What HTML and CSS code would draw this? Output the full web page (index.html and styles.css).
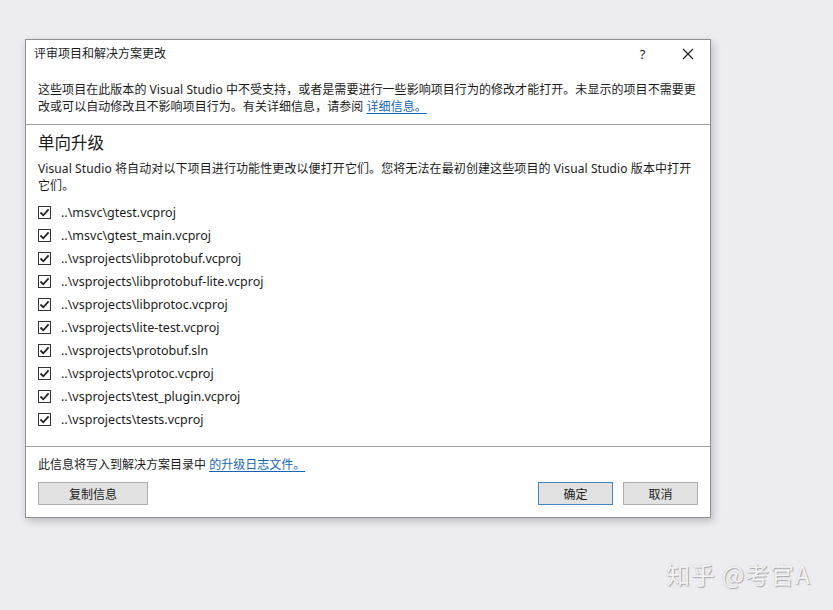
FILE: index.html
```html
<!DOCTYPE html>
<html lang="zh-CN">
<head>
<meta charset="utf-8">
<title>评审项目和解决方案更改</title>
<link rel="stylesheet" href="styles.css">
</head>
<body>
<div class="dialog">
  <div class="titlebar">
    <div class="title">评审项目和解决方案更改</div>
    <div class="tb-btn help">?</div>
    <div class="tb-btn close">
      <svg width="12" height="12" viewBox="0 0 12 12"><path d="M1 1 L11 11 M11 1 L1 11" stroke="#1a1a1a" stroke-width="1.1" fill="none"/></svg>
    </div>
  </div>
  <div class="intro">
    这些项目在此版本的 Visual Studio 中不受支持，或者是需要进行一些影响项目行为的修改才能打开。未显示的项目不需要更<br>改或可以自动修改且不影响项目行为。有关详细信息，请参阅 <a class="link">详细信息。</a>
  </div>
  <div class="section">
    <div class="heading">单向升级</div>
    <div class="desc">Visual Studio 将自动对以下项目进行功能性更改以便打开它们。您将无法在最初创建这些项目的 Visual Studio 版本中打开<br>它们。</div>
    <ul class="list">
      <li><span class="cb"><svg width="11" height="11" viewBox="0 0 11 11"><path d="M1.5 5.5 L4.3 8.3 L9.6 2.4" stroke="#222" stroke-width="1.8" fill="none"/></svg></span>..\msvc\gtest.vcproj</li>
      <li><span class="cb"><svg width="11" height="11" viewBox="0 0 11 11"><path d="M1.5 5.5 L4.3 8.3 L9.6 2.4" stroke="#222" stroke-width="1.8" fill="none"/></svg></span>..\msvc\gtest_main.vcproj</li>
      <li><span class="cb"><svg width="11" height="11" viewBox="0 0 11 11"><path d="M1.5 5.5 L4.3 8.3 L9.6 2.4" stroke="#222" stroke-width="1.8" fill="none"/></svg></span>..\vsprojects\libprotobuf.vcproj</li>
      <li><span class="cb"><svg width="11" height="11" viewBox="0 0 11 11"><path d="M1.5 5.5 L4.3 8.3 L9.6 2.4" stroke="#222" stroke-width="1.8" fill="none"/></svg></span>..\vsprojects\libprotobuf-lite.vcproj</li>
      <li><span class="cb"><svg width="11" height="11" viewBox="0 0 11 11"><path d="M1.5 5.5 L4.3 8.3 L9.6 2.4" stroke="#222" stroke-width="1.8" fill="none"/></svg></span>..\vsprojects\libprotoc.vcproj</li>
      <li><span class="cb"><svg width="11" height="11" viewBox="0 0 11 11"><path d="M1.5 5.5 L4.3 8.3 L9.6 2.4" stroke="#222" stroke-width="1.8" fill="none"/></svg></span>..\vsprojects\lite-test.vcproj</li>
      <li><span class="cb"><svg width="11" height="11" viewBox="0 0 11 11"><path d="M1.5 5.5 L4.3 8.3 L9.6 2.4" stroke="#222" stroke-width="1.8" fill="none"/></svg></span>..\vsprojects\protobuf.sln</li>
      <li><span class="cb"><svg width="11" height="11" viewBox="0 0 11 11"><path d="M1.5 5.5 L4.3 8.3 L9.6 2.4" stroke="#222" stroke-width="1.8" fill="none"/></svg></span>..\vsprojects\protoc.vcproj</li>
      <li><span class="cb"><svg width="11" height="11" viewBox="0 0 11 11"><path d="M1.5 5.5 L4.3 8.3 L9.6 2.4" stroke="#222" stroke-width="1.8" fill="none"/></svg></span>..\vsprojects\test_plugin.vcproj</li>
      <li><span class="cb"><svg width="11" height="11" viewBox="0 0 11 11"><path d="M1.5 5.5 L4.3 8.3 L9.6 2.4" stroke="#222" stroke-width="1.8" fill="none"/></svg></span>..\vsprojects\tests.vcproj</li>
    </ul>
  </div>
  <div class="footer">
    <div class="note">此信息将写入到解决方案目录中 <a class="link">的升级日志文件。</a></div>
    <div class="buttons">
      <button class="btn copy">复制信息</button>
      <div class="spacer"></div>
      <button class="btn ok">确定</button>
      <button class="btn cancel">取消</button>
    </div>
  </div>
</div>
<div class="watermark">知乎 @考官A</div>
</body>
</html>
```

FILE: styles.css
```css
html, body {
  margin: 0;
  padding: 0;
}
body {
  background: #ededf1;
  width: 833px;
  height: 610px;
  overflow: hidden;
  position: relative;
  font-family: "Segoe UI", "Noto Sans", "Noto Sans CJK SC", sans-serif;
  font-size: 12px;
  color: #1b1b1b;
  padding-top: 39px;
  box-sizing: border-box;
}
.dialog {
  margin-left: 25px;
  width: 684px;
  background: #fff;
  border: 1px solid #8e8e8e;
  box-shadow: 2px 3px 8px rgba(0, 0, 0, 0.22);
}
.titlebar {
  height: 27px;
  display: flex;
  align-items: center;
}
.title {
  flex: 1;
  padding-left: 8px;
  font-size: 12px;
  line-height: 17px;
}
.tb-btn {
  width: 45px;
  height: 27px;
  display: flex;
  align-items: center;
  justify-content: center;
}
.help {
  font-size: 13px;
  padding-left: 2px;
}
.close svg {
  display: block;
}
.intro {
  padding: 14px 12px 9px 12px;
  line-height: 17px;
  border-bottom: 1px solid #a0a0a0;
  white-space: nowrap;
  letter-spacing: 0.05px;
}
.link {
  color: #1565b7;
  text-decoration: underline;
  text-underline-offset: 2px;
}
.section {
  padding: 7px 12px 15px 12px;
  border-bottom: 1px solid #a0a0a0;
}
.heading {
  font-size: 16.5px;
  line-height: 22px;
}
.desc {
  margin-top: 6px;
  line-height: 17px;
  white-space: nowrap;
  letter-spacing: 0.1px;
}
.list {
  list-style: none;
  margin: 7px 0 0 0;
  padding: 0;
}
.list li {
  height: 23px;
  display: flex;
  align-items: center;
  font-size: 12.5px;
}
.cb {
  width: 11px;
  height: 11px;
  border: 1px solid #333;
  margin-right: 10px;
  display: flex;
  align-items: center;
  justify-content: center;
}
.cb svg {
  display: block;
}
.footer {
  padding: 9px 12px 12px 12px;
}
.note {
  line-height: 17px;
}
.buttons {
  margin-top: 9px;
  display: flex;
  gap: 10px;
}
.spacer {
  flex: 1;
}
.btn {
  height: 23px;
  background: #e1e1e1;
  border: 1px solid #adadad;
  font-family: inherit;
  font-size: 12px;
  color: #1b1b1b;
  padding: 0;
  box-sizing: border-box;
}
.copy {
  width: 110px;
}
.ok, .cancel {
  width: 75px;
}
.ok {
  border-color: #3b86c8;
}
.watermark {
  position: absolute;
  left: 666px;
  top: 559px;
  font-size: 24px;
  line-height: 30px;
  color: #f3f3f5;
  text-shadow: 1px 1px 1px #a6a6aa, 0 0 1px #b8b8bc;
  font-family: "Noto Sans CJK SC", sans-serif;
  letter-spacing: 0.8px;
}
```
